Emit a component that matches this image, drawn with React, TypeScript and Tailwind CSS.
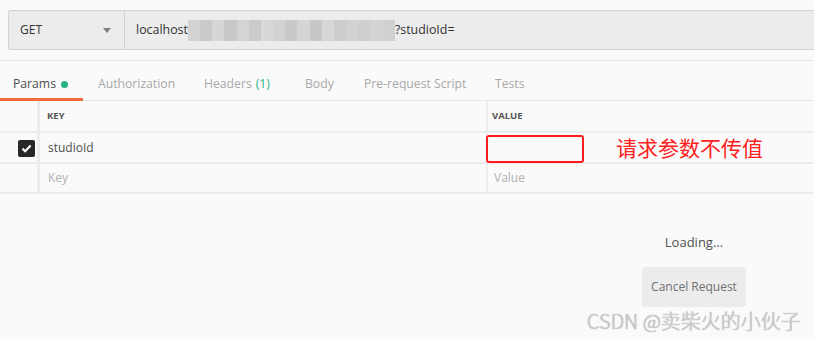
import React from "react";

const tabs = [
  { label: "Params", w: "w-[83px]", pl: "pl-[13px]", active: true },
  { label: "Authorization", w: "w-[106px]", pl: "pl-[15px]" },
  { label: "Headers", w: "w-[101px]", pl: "pl-[15px]", count: "(1)" },
  { label: "Body", w: "w-[59px]", pl: "pl-[15px]" },
  { label: "Pre-request Script", w: "w-[131px]", pl: "pl-[15px]" },
  { label: "Tests", w: "w-[100px]", pl: "pl-[15px]" },
];

const blurBlocks = [
  "bg-[#d2d2d2]", "bg-[#cacaca]", "bg-[#d6d6d6]", "bg-[#c8c8c8]", "bg-[#d4d4d4]",
  "bg-[#cbcbcb]", "bg-[#d8d8d8]", "bg-[#d3d3d3]", "bg-[#c9c9c9]", "bg-[#d5d5d5]",
  "bg-[#c7c7c7]", "bg-[#d7d7d7]", "bg-[#cdcdcd]", "bg-[#d2d2d2]", "bg-[#cfcfcf]",
  "bg-[#d4d4d4]", "bg-[#d0d0d0]",
];

export default function App() {
  return (
    <div className="relative h-[339px] w-[814px] overflow-hidden bg-[#fafafa] font-['Open_Sans','Noto_Sans_CJK_SC',sans-serif] text-[#505050]">
      {/* url bar */}
      <div className="h-[61px] border-b border-[#e8e8e8] pl-2 pt-[10px]">
        <div className="flex h-[40px] w-[820px] rounded-l-[3px] border border-r-0 border-[#d4d4d4] bg-[#ececec]">
          <div className="flex w-[116px] flex-none items-center justify-between border-r border-[#d4d4d4] pl-[11px] pr-[13px]">
            <span className="text-[12px] text-[#333]">GET</span>
            <span className="h-0 w-0 border-x-[4px] border-t-[5px] border-x-transparent border-t-[#808080]" />
          </div>
          <div className="flex items-center pl-[11px] text-[12.4px] text-[#333]">
            <span>localhost</span>
            <span className="flex h-[21px] w-[207px]">
              {blurBlocks.map((c, i) => (
                <span key={i} className={`h-full flex-1 ${c}`} />
              ))}
            </span>
            <span>?studioId=</span>
          </div>
        </div>
      </div>

      {/* tabs */}
      <div className="flex h-[40px] border-b border-[#e6e6e6] pt-[7px]">
        {tabs.map((t) => (
          <div
            key={t.label}
            className={`relative flex flex-none items-center ${t.w} ${t.pl} text-[12.2px] ${
              t.active ? "text-[#505050]" : "text-[#a8a8a8]"
            }`}
          >
            <span>{t.label}</span>
            {t.count ? <span className="ml-1 text-[#26b47f]">{t.count}</span> : null}
            {t.active ? <span className="ml-[5px] h-[7px] w-[7px] rounded-full bg-[#26b47f]" /> : null}
            {t.active ? <span className="absolute bottom-[-1px] left-0 h-[3px] w-full bg-[#f26b3a]" /> : null}
          </div>
        ))}
      </div>

      {/* table */}
      <div className="text-[12px]">
        <div className="flex h-[32px] border-b-2 border-[#ececec]">
          <div className="w-[40px] flex-none border-r-[3px] border-[#ececec]" />
          <div className="flex w-[448px] flex-none items-center border-r-2 border-[#ececec] pl-[7px] text-[9.5px] font-bold text-[#555]">
            KEY
          </div>
          <div className="flex flex-1 items-center pl-[4px] text-[9.5px] font-bold text-[#555]">VALUE</div>
        </div>
        <div className="flex h-[31px] border-b-2 border-[#ececec]">
          <div className="flex w-[40px] flex-none items-center justify-end border-r-[3px] border-[#ececec] pr-[2px] pt-[2px]">
            <span className="flex h-[17px] w-[17px] items-center justify-center rounded-[2px] bg-[#282828]">
              <svg width="11" height="9" viewBox="0 0 11 9">
                <path d="M1.5 4.6 L4.2 7.2 L9.6 1.6" fill="none" stroke="#fff" strokeWidth="2.2" />
              </svg>
            </span>
          </div>
          <div className="flex w-[448px] flex-none items-center border-r-2 border-[#ececec] pl-[8px] text-[#505050]">
            studioId
          </div>
          <div className="flex-1" />
        </div>
        <div className="flex h-[30px] border-b-2 border-[#ececec]">
          <div className="w-[40px] flex-none border-r-[3px] border-[#ececec]" />
          <div className="flex w-[448px] flex-none items-center border-r-2 border-[#ececec] pl-[8px] text-[#b0b0b0]">
            Key
          </div>
          <div className="flex flex-1 items-center pl-[6px] text-[#b0b0b0]">Value</div>
        </div>
      </div>

      {/* loading */}
      <div className="ml-[594px] mt-[39px] flex w-[200px] flex-col items-center">
        <div className="text-[13px] text-[#505050]">Loading...</div>
        <div className="mt-[14px] flex h-[40px] w-[104px] items-center justify-center rounded-[3px] bg-[#ececec] text-[12px] text-[#707070]">
          Cancel Request
        </div>
      </div>

      {/* annotation */}
      <div className="absolute left-[486px] top-[135px] h-[28px] w-[98px] rounded-[3px] border-2 border-[#ff1c1c]" />
      <div className="absolute left-[616px] top-[133px] font-['Noto_Sans_CJK_SC',sans-serif] text-[21px] leading-[28px] text-[#ff2020]">
        请求参数不传值
      </div>

      {/* watermark */}
      <div className="absolute left-[587px] top-[307px] font-['Noto_Sans_CJK_SC',sans-serif] text-[20px] font-light leading-[28px] text-[#cfcfcf] [text-shadow:0_0_1px_#8a8a8a]">
        CSDN @卖柴火的小伙子
      </div>
    </div>
  );
}
